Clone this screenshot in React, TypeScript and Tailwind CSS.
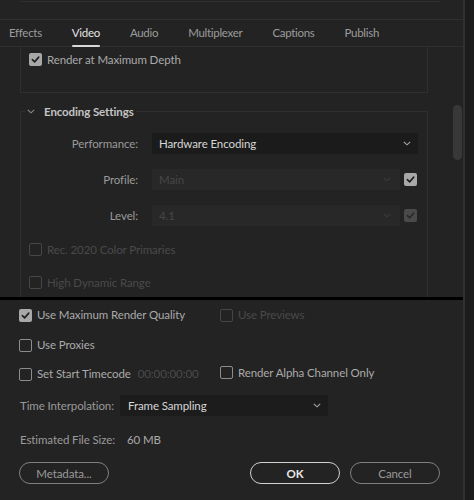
import React from "react";

const font = { fontFamily: "Lato, 'Noto Sans', sans-serif" };

function Check({ checked = false, dim = false }: { checked?: boolean; dim?: boolean }) {
  if (checked) {
    return (
      <span
        className={`flex h-[13px] w-[13px] shrink-0 items-center justify-center rounded-[2px] ${
          dim ? "bg-[#4a4a4a]" : "bg-[#a8a8a8]"
        }`}
      >
        <svg width="9" height="9" viewBox="0 0 10 10" fill="none">
          <path d="M1.5 5.2 L4 7.6 L8.6 2.4" stroke={dim ? "#2a2a2a" : "#202020"} strokeWidth="1.8" strokeLinecap="round" strokeLinejoin="round" />
        </svg>
      </span>
    );
  }
  return (
    <span
      className={`block h-[13px] w-[13px] shrink-0 rounded-[2px] border-[1.5px] ${
        dim ? "border-[#464646]" : "border-[#8c8c8c]"
      }`}
    />
  );
}

function Chevron({ color = "#a8a8a8" }: { color?: string }) {
  return (
    <svg width="8" height="5" viewBox="0 0 8 5" fill="none">
      <path d="M0.8 0.8 L4 3.8 L7.2 0.8" stroke={color} strokeWidth="1.1" />
    </svg>
  );
}

export default function App() {
  return (
    <div className="flex h-[500px] w-[474px] overflow-hidden whitespace-nowrap bg-[#232323] text-[11.5px] tracking-[-0.1px]" style={font}>
      <div className="flex w-[463px] flex-col">
        {/* top strip */}
        <div className="h-[19px] shrink-0">
          <div className="ml-[20px] h-[2px] w-[420px] border-b border-[#2e2e2e]" />
        </div>
        {/* tabs */}
        <div className="flex h-[28px] shrink-0 items-center gap-[30px] border-y border-[#2f2f2f] pl-[9px] text-[11.5px] tracking-[-0.3px] text-[#9c9c9c]">
          <span>Effects</span>
          <span className="relative text-[#e4e4e4]">
            Video
            <span className="absolute -bottom-[5px] left-0 right-0 h-[2px] rounded bg-[#d8d8d8]" />
          </span>
          <span>Audio</span>
          <span>Multiplexer</span>
          <span>Captions</span>
          <span>Publish</span>
        </div>
        {/* scroll area */}
        <div className="flex h-[250px] shrink-0 overflow-hidden">
          <div className="w-[453px]">
            <div className="ml-[20px] flex h-[46px] w-[408px] items-start border-x border-b border-[#2f2f2f] pl-[8px] pt-[4px]">
              <div className="flex items-center gap-[5px] text-[#aaaaaa]">
                <Check checked />
                <span>Render at Maximum Depth</span>
              </div>
            </div>
            <fieldset className="ml-[20px] mt-[10px] w-[408px] border-x border-t border-[#2f2f2f] pb-[20px]">
              <legend className="ml-[4px] flex items-center gap-[9px] px-[2px] font-bold text-[#c4c4c4]">
                <Chevron color="#8a8a8a" />
                <span>Encoding Settings</span>
              </legend>
              <div className="mt-[13px] flex items-center">
                <span className="w-[117px] text-right text-[#9a9a9a]">Performance:</span>
                <div className="ml-[14px] flex h-[21px] w-[266px] items-center justify-between bg-[#1b1b1b] pl-[7px] pr-[7px] text-[#d6d6d6]">
                  <span>Hardware Encoding</span>
                  <Chevron />
                </div>
              </div>
              <div className="mt-[15px] flex items-center">
                <span className="w-[117px] text-right text-[#9a9a9a]">Profile:</span>
                <div className="ml-[14px] flex h-[21px] w-[248px] items-center justify-between bg-[#282828] pl-[7px] pr-[9px] text-[#474747]">
                  <span>Main</span>
                  <Chevron color="#3c3c3c" />
                </div>
                <span className="ml-[4px]">
                  <Check checked />
                </span>
              </div>
              <div className="mt-[15px] flex items-center">
                <span className="w-[117px] text-right text-[#9a9a9a]">Level:</span>
                <div className="ml-[14px] flex h-[21px] w-[248px] items-center justify-between bg-[#282828] pl-[7px] pr-[9px] text-[#474747]">
                  <span>4.1</span>
                  <Chevron color="#3c3c3c" />
                </div>
                <span className="ml-[4px]">
                  <Check checked dim />
                </span>
              </div>
              <div className="ml-[8px] mt-[15px] flex items-center gap-[5px] text-[#4a4a4a]">
                <Check dim />
                <span>Rec. 2020 Color Primaries</span>
              </div>
              <div className="ml-[8px] mt-[15px] flex items-center gap-[5px] text-[#4a4a4a]">
                <Check dim />
                <span>High Dynamic Range</span>
              </div>
            </fieldset>
          </div>
          <div className="pt-[58px]">
            <div className="h-[55px] w-[9px] rounded-full bg-[#383838]" />
          </div>
        </div>
        {/* divider */}
        <div className="h-[3px] shrink-0 bg-black" />
        {/* bottom */}
        <div className="flex flex-1 flex-col pl-[19px] pt-[8px] text-[#aaaaaa]">
          <div className="flex h-[14px] items-center">
            <div className="flex w-[201px] items-center gap-[5px]">
              <Check checked />
              <span>Use Maximum Render Quality</span>
            </div>
            <div className="flex items-center gap-[5px] text-[#4a4a4a]">
              <Check dim />
              <span>Use Previews</span>
            </div>
          </div>
          <div className="mt-[16px] flex h-[14px] items-center gap-[5px]">
            <Check />
            <span>Use Proxies</span>
          </div>
          <div className="mt-[15px] flex h-[14px] items-center">
            <div className="flex w-[201px] items-center gap-[5px]">
              <Check />
              <span>Set Start Timecode</span>
              <span className="ml-[2px] text-[#4a4a4a]">00:00:00:00</span>
            </div>
            <div className="-mt-[3px] flex items-center gap-[5px]">
              <Check />
              <span>Render Alpha Channel Only</span>
            </div>
          </div>
          <div className="mt-[14px] flex items-center">
            <span className="w-[101px] pl-[1px] text-[#9a9a9a]">Time Interpolation:</span>
            <div className="flex h-[21px] w-[208px] items-center justify-between bg-[#1c1c1c] pl-[8px] pr-[7px] text-[#d6d6d6]">
              <span>Frame Sampling</span>
              <Chevron />
            </div>
          </div>
          <div className="mt-[15px] flex items-center">
            <span className="w-[108px] pl-[1px] text-[#9a9a9a]">Estimated File Size:</span>
            <span className="text-[#aaaaaa]">60 MB</span>
          </div>
          <div className="mt-[14px] flex items-center">
            <button className="flex h-[22px] w-[90px] items-center justify-center rounded-full border-[1.5px] border-[#808080] text-[#9a9a9a]">
              Metadata...
            </button>
            <button className="ml-[141px] flex h-[22px] w-[90px] items-center justify-center rounded-full border-[1.5px] border-[#d0d0d0] font-bold text-[#e8e8e8]">
              OK
            </button>
            <button className="ml-[10px] flex h-[22px] w-[90px] items-center justify-center rounded-full border-[1.5px] border-[#808080] text-[#9a9a9a]">
              Cancel
            </button>
          </div>
        </div>
      </div>
      <div className="w-[2px] bg-[#303030]" />
      <div className="flex-1 bg-[#1c1c1c]" />
    </div>
  );
}
